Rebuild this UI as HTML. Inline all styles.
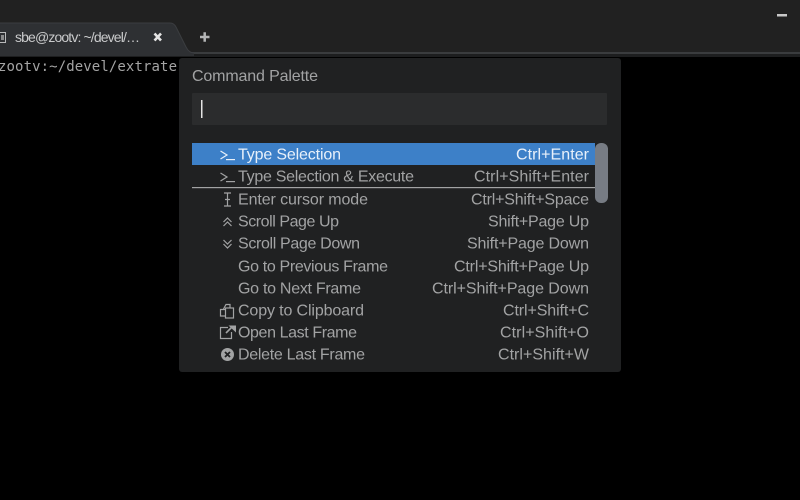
<!DOCTYPE html>
<html><head><meta charset="utf-8"><style>
html,body{margin:0;padding:0;background:#000;width:800px;height:500px;overflow:hidden}
svg{display:block}
text{font-family:"Liberation Sans",sans-serif;font-size:16px;fill:#a2a3a4}
.m{font-family:"DejaVu Sans Mono",monospace;font-size:14px;fill:#a4a4a4}
.i{fill:none;stroke:#a2a3a4;stroke-width:1.200}
</style></head><body>
<svg width="800" height="500" viewBox="0 0 800 500" xmlns="http://www.w3.org/2000/svg">
<rect width="800" height="500" fill="#000"/>
<rect width="800" height="52" fill="#212121"/>
<rect y="52" width="800" height="2" fill="#3a3c3e"/>
<rect y="54" width="800" height="3" fill="#1d1e1f"/>
<path d="M0 23H170Q174 23 176 27L186 47Q189 53 194 53V56H0Z" fill="#2e3033"/>
<path d="M0 23H170Q174 23 176 27L186 47Q189 53 194 53" fill="none" stroke="#3b3d40"/>
<rect x="-1" y="32.500" width="6.500" height="10" fill="none" stroke="#b8b9ba" stroke-width="1"/>
<rect x="1" y="35" width="3" height="5" fill="#8a8b8c"/>
<text x="15" y="42" textLength="125" style="font-size:14px;fill:#c9cacb">sbe@zootv: ~/devel/…</text>
<path d="M154.500 33.500L161 40.500M161 33.500L154.500 40.500" stroke="#e4e4e4" stroke-width="2.600"/>
<path d="M200 37H209.500M204.700 32.200V41.800" stroke="#b4b5b6" stroke-width="2.500"/>
<rect x="777" y="14" width="10" height="2.500" fill="#c8c8c8"/>
<text class="m" x="-2" y="71" textLength="179">zootv:~/devel/extrate</text>
<rect x="179" y="58" width="442" height="314" rx="3" fill="#202122"/>
<text x="192" y="81" textLength="126" style="font-size:16px">Command Palette</text>
<rect x="192" y="93" width="415" height="32" rx="1" fill="#2b2c2d"/>
<rect x="201" y="100" width="1.500" height="18" fill="#e4e4e4"/>
<rect x="192" y="143" width="403" height="22" fill="#3d80c8"/>
<rect x="192" y="187" width="403" height="1.200" fill="#a2a3a4"/>
<rect x="595" y="143" width="13" height="60" rx="6" fill="#777c84"/>

<path d="M220.500 151L227 155L220.500 159" fill="none" stroke="#e8f0fa" stroke-width="1.200"/>
<rect x="226" y="159" width="9" height="1.200" fill="#e8f0fa"/>
<text x="238" y="159.500" textLength="103" style="fill:#e8f0fa">Type Selection</text>
<text x="516" y="159.500" textLength="73" style="fill:#e8f0fa">Ctrl+Enter</text>

<path class="i" d="M220.500 173L227 177L220.500 181"/>
<rect x="226" y="181" width="9" height="1.200" fill="#a2a3a4"/>
<text x="238" y="181.500" textLength="176">Type Selection &amp; Execute</text>
<text x="474" y="181.500" textLength="115">Ctrl+Shift+Enter</text>

<path class="i" d="M224 193H231M224 206H231M227.500 193V206M225 199.500H230"/>
<text x="238" y="204.500" textLength="130">Enter cursor mode</text>
<text x="471" y="204.500" textLength="118">Ctrl+Shift+Space</text>

<path class="i" d="M223.500 222L227.500 218L231.500 222M223.500 226L227.500 222L231.500 226"/>
<text x="238" y="226.500" textLength="101">Scroll Page Up</text>
<text x="488" y="226.500" textLength="101">Shift+Page Up</text>

<path class="i" d="M223.500 240L227.500 244L231.500 240M223.500 244L227.500 248L231.500 244"/>
<text x="238" y="248.500" textLength="122">Scroll Page Down</text>
<text x="467" y="248.500" textLength="122">Shift+Page Down</text>

<text x="238" y="271.500" textLength="150">Go to Previous Frame</text>
<text x="454" y="271.500" textLength="135">Ctrl+Shift+Page Up</text>

<text x="238" y="293.500" textLength="123">Go to Next Frame</text>
<text x="432" y="293.500" textLength="157">Ctrl+Shift+Page Down</text>

<path class="i" d="M226 309.500H220.500V316H225M223.500 309L226 304.500H230V308"/>
<rect x="225.500" y="308" width="8" height="10" fill="#202122" stroke="#a2a3a4" stroke-width="1.200"/>
<text x="238" y="315.500" textLength="126">Copy to Clipboard</text>
<text x="503" y="315.500" textLength="86">Ctrl+Shift+C</text>

<path class="i" d="M228 327.500H220.500V338.500H231.500V332"/>
<path d="M226 333L232 327" stroke="#a2a3a4" stroke-width="1.600" fill="none"/>
<path d="M228.500 325.500H236V332.500Z" fill="#a2a3a4"/>
<text x="238" y="337.500" textLength="119">Open Last Frame</text>
<text x="500" y="337.500" textLength="89">Ctrl+Shift+O</text>

<circle cx="227.500" cy="354.500" r="6.500" fill="#a2a3a4"/>
<path d="M225 352L230 357M230 352L225 357" stroke="#202122" stroke-width="1.800"/>
<text x="238" y="359.500" textLength="127">Delete Last Frame</text>
<text x="498" y="359.500" textLength="91">Ctrl+Shift+W</text>
</svg>
</body></html>
